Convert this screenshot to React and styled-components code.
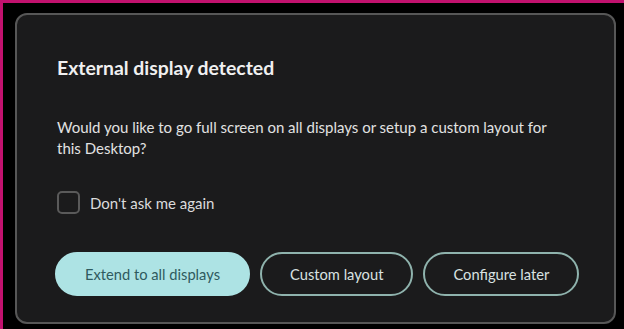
import React from "react";
import styled, { createGlobalStyle } from "styled-components";

const Global = createGlobalStyle`
  html, body { margin: 0; padding: 0; background: #000; }
  body { width: 624px; height: 329px; overflow: hidden; font-family: Lato, "Noto Sans", sans-serif; }
`;

const Frame = styled.div`
  width: 624px;
  height: 329px;
  box-sizing: border-box;
  background: #000;
  border-top: 3px solid #c2126f;
  border-left: 3px solid #c2126f;
  padding: 10px 8px 5px 12px;
`;

const Dialog = styled.div`
  box-sizing: border-box;
  width: 601px;
  height: 311px;
  background: #1b1b1c;
  border: 2px solid #575757;
  border-radius: 12px;
  padding: 40px 40px 0 40px;
  display: flex;
  flex-direction: column;
`;

const Title = styled.h2`
  margin: 0;
  font-size: 19.4px;
  line-height: 26px;
  font-weight: 700;
  color: #f0f0f0;
`;

const Body = styled.p`
  margin: 36px 0 0 0;
  font-size: 15px;
  line-height: 21px;
  color: #e2e2e2;
  max-width: 496px;
`;

const CheckRow = styled.label`
  margin-top: 32px;
  display: flex;
  align-items: center;
  gap: 10px;
  font-size: 15px;
  color: #dcdcdc;
`;

const Box = styled.span`
  box-sizing: border-box;
  width: 23px;
  height: 23px;
  border: 2px solid #5a5a5a;
  border-radius: 5px;
`;

const Buttons = styled.div`
  margin-top: 38px;
  margin-left: -2px;
  display: flex;
  gap: 10px;
`;

const Button = styled.button`
  box-sizing: border-box;
  flex-shrink: 0;
  white-space: nowrap;
  height: 44px;
  padding: 0 28px;
  border-radius: 22px;
  font-family: Lato, "Noto Sans", sans-serif;
  font-size: 14.7px;
  border: 2px solid ${(p) => (p.$primary ? "#ade3e4" : "#8fb3ad")};
  background: ${(p) => (p.$primary ? "#ade3e4" : "transparent")};
  color: ${(p) => (p.$primary ? "#2f5a5e" : "#d9e2e1")};
`;

export default function App() {
  return (
    <>
      <Global />
      <Frame>
        <Dialog>
          <Title>External display detected</Title>
          <Body>
            Would you like to go full screen on all displays or setup a custom layout for
            this Desktop?
          </Body>
          <CheckRow>
            <Box />
            Don't ask me again
          </CheckRow>
          <Buttons>
            <Button $primary>Extend to all displays</Button>
            <Button>Custom layout</Button>
            <Button>Configure later</Button>
          </Buttons>
        </Dialog>
      </Frame>
    </>
  );
}
